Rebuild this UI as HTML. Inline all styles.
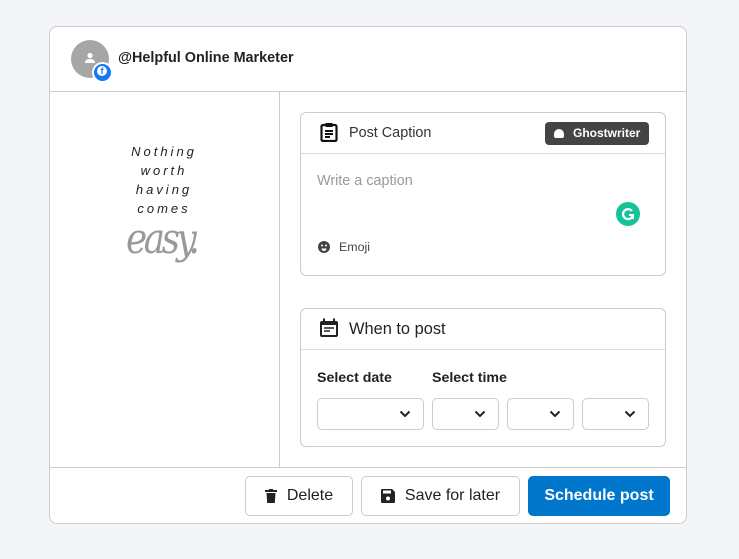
<!DOCTYPE html><html><head><style>
*{box-sizing:border-box;margin:0;padding:0}
body{width:739px;height:559px;background:#f3f5f8;font-family:"Liberation Sans",sans-serif;position:relative;overflow:hidden;color:#222}
.a{position:absolute}
.card{left:49px;top:26px;width:638px;height:498px;background:#fff;border:1px solid #ccc;border-radius:8px}
.box{border:1px solid #ccc;border-radius:6px;background:#fff}
.sel{top:398px;height:32px;border:1px solid #ccc;border-radius:5px}
.sel svg{position:absolute;right:12px;top:11px}
.btn{top:476px;height:40px;border:1px solid #ccc;border-radius:5px;font-size:16px;display:flex;align-items:center;justify-content:center;gap:10px;background:#fff;color:#222}
.q{font-family:"Liberation Sans",sans-serif;font-style:italic;font-size:13px;letter-spacing:3px;color:#222;text-align:center;width:230px;left:49px}
</style></head><body>
<div class="a card"></div>
<div class="a" style="left:50px;top:91px;width:636px;height:1px;background:#ccc"></div>
<div class="a" style="left:279px;top:92px;width:1px;height:375px;background:#ccc"></div>
<div class="a" style="left:50px;top:467px;width:636px;height:1px;background:#ccc"></div>
<div class="a" style="left:71px;top:40px;width:38px;height:38px;border-radius:50%;background:#a6a6a6"></div>
<svg class="a" style="left:83px;top:51px" width="14" height="14" viewBox="0 0 14 14"><circle cx="7" cy="4.5" r="2.6" fill="#fff"/><path d="M2 12c0-3 2.5-4 5-4s5 1 5 4z" fill="#fff"/></svg>
<div class="a" style="left:92px;top:62px;width:21px;height:21px;border-radius:50%;background:#1877f2;border:2px solid #fff"></div>
<div class="a" style="left:97px;top:66px;width:10px;height:10px;border-radius:50%;background:#fff;color:#1877f2;font-size:9px;font-weight:bold;line-height:11px;text-align:center">f</div>
<div class="a" style="left:118px;top:50px;font-size:14.4px;font-weight:bold;color:#222">@Helpful Online Marketer</div>
<div class="a q" style="top:144px">Nothing</div>
<div class="a q" style="top:163px">worth</div>
<div class="a q" style="top:182px">having</div>
<div class="a q" style="top:201px">comes</div>
<div class="a" style="left:126px;top:214px;font-family:'DejaVu Serif',serif;font-style:italic;font-size:42px;color:#999;letter-spacing:-4px;transform:scaleX(0.85);transform-origin:left">easy.</div>

<div class="a box" style="left:300px;top:112px;width:366px;height:164px"></div>
<div class="a" style="left:301px;top:153px;width:364px;height:1px;background:#ddd"></div>
<svg class="a" style="left:319px;top:122px" width="20" height="20" viewBox="0 0 20 20"><rect x="2.5" y="3" width="15" height="16" rx="1.5" fill="none" stroke="#111" stroke-width="2.2"/><rect x="6.5" y="1" width="7" height="4" fill="#111"/><path d="M6 9h8M6 12h8M6 15h5" stroke="#111" stroke-width="2"/></svg>
<div class="a" style="left:349px;top:125px;font-size:14.4px;color:#333">Post Caption</div>
<div class="a" style="left:545px;top:122px;width:104px;height:23px;background:#444;border-radius:4px;color:#fff;font-size:12px;font-weight:bold;line-height:23px;padding-left:28px">Ghostwriter</div>
<div class="a" style="left:554px;top:129px;width:10px;height:9px;background:#fff;border-radius:5px 5px 2px 2px"></div>
<div class="a" style="left:317px;top:173px;font-size:14.4px;color:#999">Write a caption</div>
<div class="a" style="left:616px;top:202px;width:24px;height:24px;border-radius:50%;background:#15c39a"></div>
<svg class="a" style="left:620px;top:206px" width="16" height="16" viewBox="0 0 16 16"><path d="M12 5A5 5 0 1 0 13 9" fill="none" stroke="#fff" stroke-width="2.2"/><path d="M9 9h4v4" fill="none" stroke="#fff" stroke-width="2"/></svg>
<svg class="a" style="left:318px;top:241px" width="12" height="12" viewBox="0 0 12 12"><circle cx="6" cy="6" r="6" fill="#444"/><circle cx="4" cy="4.5" r="1" fill="#fff"/><circle cx="8" cy="4.5" r="1" fill="#fff"/><path d="M3.5 7.5h5a2.5 2.5 0 0 1-5 0z" fill="#fff"/></svg>
<div class="a" style="left:339px;top:240px;font-size:12.4px;color:#444">Emoji</div>

<div class="a box" style="left:300px;top:308px;width:366px;height:139px"></div>
<div class="a" style="left:301px;top:349px;width:364px;height:1px;background:#ddd"></div>
<svg class="a" style="left:319px;top:318px" width="20" height="20" viewBox="0 0 20 20"><rect x="1" y="3" width="18" height="16" rx="2" fill="#222"/><rect x="3" y="7" width="14" height="10" fill="#fff"/><rect x="4" y="0.5" width="2" height="4" fill="#222"/><rect x="14" y="0.5" width="2" height="4" fill="#222"/><path d="M5 10h10M5 13h6" stroke="#222" stroke-width="1.6"/></svg>
<div class="a" style="left:349px;top:320px;font-size:16.4px;color:#222">When to post</div>
<div class="a" style="left:317px;top:370px;font-size:14.2px;font-weight:bold">Select date</div>
<div class="a" style="left:432px;top:370px;font-size:14.2px;font-weight:bold">Select time</div>
<div class="a sel" style="left:317px;width:107px"><svg width="12" height="8"><path d="M1.5 1.5l4.5 4.5 4.5-4.5" fill="none" stroke="#222" stroke-width="2"/></svg></div>
<div class="a sel" style="left:432px;width:67px"><svg width="12" height="8"><path d="M1.5 1.5l4.5 4.5 4.5-4.5" fill="none" stroke="#222" stroke-width="2"/></svg></div>
<div class="a sel" style="left:507px;width:67px"><svg width="12" height="8"><path d="M1.5 1.5l4.5 4.5 4.5-4.5" fill="none" stroke="#222" stroke-width="2"/></svg></div>
<div class="a sel" style="left:582px;width:67px"><svg width="12" height="8"><path d="M1.5 1.5l4.5 4.5 4.5-4.5" fill="none" stroke="#222" stroke-width="2"/></svg></div>

<div class="a btn" style="left:245px;width:108px"><svg width="12" height="14" viewBox="0 0 12 14"><rect x="0" y="1" width="12" height="2" fill="#222"/><rect x="4" y="0" width="4" height="2" fill="#222"/><path d="M1.5 4h9l-0.7 10h-7.6z" fill="#222"/></svg>Delete</div>
<div class="a btn" style="left:361px;width:159px"><svg width="14" height="14" viewBox="0 0 14 14"><path d="M0 1a1 1 0 0 1 1-1h10l3 3v10a1 1 0 0 1-1 1H1a1 1 0 0 1-1-1z" fill="#222"/><rect x="2" y="1.5" width="8" height="3" fill="#fff"/><circle cx="7" cy="9.5" r="2" fill="#fff"/></svg>Save for later</div>
<div class="a btn" style="left:528px;width:142px;background:#0077cc;border-color:#0077cc;color:#fff;font-weight:bold">Schedule post</div>
</body></html>
